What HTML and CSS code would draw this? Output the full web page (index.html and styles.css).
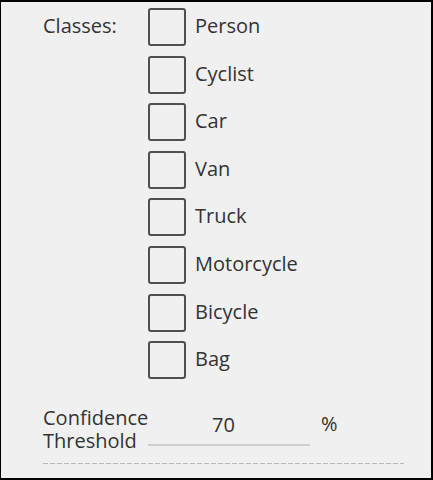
FILE: index.html
```html
<!DOCTYPE html>
<html>
	<head>
		<link rel="stylesheet" href="styles.css">
	</head>
	<body>
		<div class="panel">
			<div class="classes">
				<div class="field_label">Classes:</div>
				<div class="options">
					<label class="option"><input type="checkbox"/><span>Person</span></label>
					<label class="option"><input type="checkbox"/><span>Cyclist</span></label>
					<label class="option"><input type="checkbox"/><span>Car</span></label>
					<label class="option"><input type="checkbox"/><span>Van</span></label>
					<label class="option"><input type="checkbox"/><span>Truck</span></label>
					<label class="option"><input type="checkbox"/><span>Motorcycle</span></label>
					<label class="option"><input type="checkbox"/><span>Bicycle</span></label>
					<label class="option"><input type="checkbox"/><span>Bag</span></label>
				</div>
			</div>
			<div class="threshold">
				<div class="field_label">Confidence<br/>Threshold</div>
				<input type="text" class="value" value="70"/>
				<span class="unit">%</span>
			</div>
			<div class="divider"></div>
		</div>
	</body>
</html>
```

FILE: styles.css
```css
body {
	margin: 0;
}

.panel {
	width: 433px;
	height: 480px;
	box-sizing: border-box;
	border: 2px solid #000;
	border-left-width: 1px;
	background: #f0f0f0;
	padding: 6px 0 0 42px;
	font-family: "Open Sans", sans-serif;
	font-size: 20px;
	color: #333;
}

.classes {
	display: flex;
}
.classes .field_label {
	width: 105px;
	line-height: 36px;
}

.options {
	display: flex;
	flex-direction: column;
	gap: 9.6px;
}

.option {
	display: flex;
	align-items: center;
	gap: 9px;
	height: 38px;
}
.option span {
	padding-bottom: 3px;
}
.option input {
	appearance: none;
	margin: 0;
	width: 38px;
	height: 38px;
	box-sizing: border-box;
	border: 2px solid #505050;
	border-radius: 3px;
	background: #f0f0f0;
}

.threshold {
	display: flex;
	align-items: flex-start;
	margin-top: 27px;
	line-height: 23px;
}
.threshold .field_label {
	width: 105px;
}

.value {
	width: 162px;
	height: 35px;
	margin: 5px 0 0 0;
	box-sizing: border-box;
	padding: 0 11px 6px 0;
	border: none;
	border-bottom: 2px solid #cdcdcd;
	background: transparent;
	font-family: inherit;
	font-size: 20px;
	color: #333;
	text-align: center;
	outline: none;
}

.unit {
	margin: 6px 0 0 11px;
}

.divider {
	width: 361px;
	height: 1px;
	margin-top: 11px;
	background: repeating-linear-gradient(to right, #b8b8b8 0 5px, transparent 5px 7px);
}
```
